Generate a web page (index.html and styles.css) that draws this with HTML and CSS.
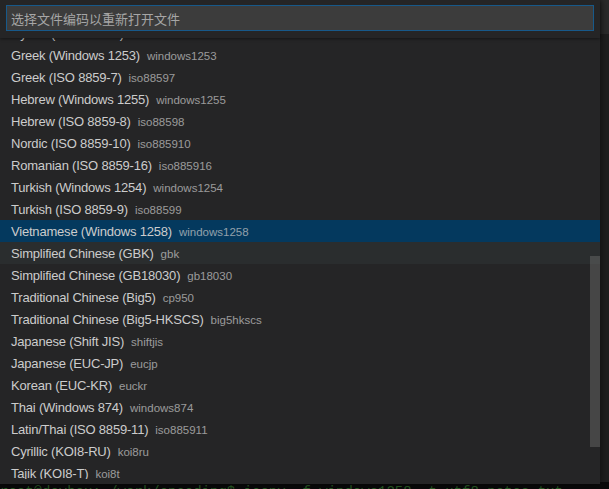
FILE: index.html
```html
<html>
	<head>
		<title>Reopen with Encoding</title>
		<meta charset="utf-8">
		<link rel="stylesheet" href="styles.css">
	</head>
	<body>
		<div class="backdrop">
			<div class="topbar"></div>
			<div class="editor"></div>
			<div class="terminal">root@devbox:~/work/encoding$ iconv -f windows1258 -t utf8 notes.txt</div>
		</div>

		<div class="quick-open">
			<div class="header">
				<input class="filter" type="text" placeholder="选择文件编码以重新打开文件">
			</div>
			<div class="list">
				<div class="rows">
					<div class="row"><span class="label">Cyrillic (ISO 8859-5)</span><span class="desc">iso88595</span></div>
					<div class="row"><span class="label">Greek (Windows 1253)</span><span class="desc">windows1253</span></div>
					<div class="row"><span class="label">Greek (ISO 8859-7)</span><span class="desc">iso88597</span></div>
					<div class="row"><span class="label">Hebrew (Windows 1255)</span><span class="desc">windows1255</span></div>
					<div class="row"><span class="label">Hebrew (ISO 8859-8)</span><span class="desc">iso88598</span></div>
					<div class="row"><span class="label">Nordic (ISO 8859-10)</span><span class="desc">iso885910</span></div>
					<div class="row"><span class="label">Romanian (ISO 8859-16)</span><span class="desc">iso885916</span></div>
					<div class="row"><span class="label">Turkish (Windows 1254)</span><span class="desc">windows1254</span></div>
					<div class="row"><span class="label">Turkish (ISO 8859-9)</span><span class="desc">iso88599</span></div>
					<div class="row selected"><span class="label">Vietnamese (Windows 1258)</span><span class="desc">windows1258</span></div>
					<div class="row hover"><span class="label">Simplified Chinese (GBK)</span><span class="desc">gbk</span></div>
					<div class="row"><span class="label">Simplified Chinese (GB18030)</span><span class="desc">gb18030</span></div>
					<div class="row"><span class="label">Traditional Chinese (Big5)</span><span class="desc">cp950</span></div>
					<div class="row"><span class="label">Traditional Chinese (Big5-HKSCS)</span><span class="desc">big5hkscs</span></div>
					<div class="row"><span class="label">Japanese (Shift JIS)</span><span class="desc">shiftjis</span></div>
					<div class="row"><span class="label">Japanese (EUC-JP)</span><span class="desc">eucjp</span></div>
					<div class="row"><span class="label">Korean (EUC-KR)</span><span class="desc">euckr</span></div>
					<div class="row"><span class="label">Thai (Windows 874)</span><span class="desc">windows874</span></div>
					<div class="row"><span class="label">Latin/Thai (ISO 8859-11)</span><span class="desc">iso885911</span></div>
					<div class="row"><span class="label">Cyrillic (KOI8-RU)</span><span class="desc">koi8ru</span></div>
					<div class="row"><span class="label">Tajik (KOI8-T)</span><span class="desc">koi8t</span></div>
				</div>
				<div class="scrollbar"></div>
			</div>
		</div>
	</body>
</html>
```

FILE: styles.css
```css
html, body {
	margin: 0;
	padding: 0;
	height: 100%;
	overflow: hidden;
}

body {
	background: #1e1e1e;
	font-family: "Liberation Sans", "Noto Sans CJK SC", sans-serif;
	color: #cccccc;
}

.backdrop {
	display: flex;
	flex-direction: column;
	height: 100%;
}

.topbar {
	height: 34px;
	background: #2a2a2a;
}

.editor {
	flex: 1;
	background: #1e1e1e;
}

.terminal {
	height: 5px;
	padding-top: 2px;
	overflow: hidden;
	background: #0a0a0a;
	color: #2a5f26;
	font-family: "Liberation Mono", monospace;
	font-size: 14px;
	line-height: 16px;
	white-space: nowrap;
}

/* the quick pick floats over the editor */
.quick-open {
	position: absolute;
	top: 0;
	left: 0;
	width: 600px;
	height: 484px;
	background: #252526;
	box-shadow: 0 0 8px rgba(0, 0, 0, 0.6);
	display: flex;
	flex-direction: column;
}

.header {
	padding: 5px 6px 7px 6px;
	box-shadow: 0 1px 3px rgba(0, 0, 0, 0.45);
	position: relative;
	z-index: 1;
}

.filter {
	display: block;
	width: 100%;
	height: 26px;
	box-sizing: border-box;
	margin: 0;
	padding: 0 4px;
	background: #3c3c3c;
	border: 1px solid #17598a;
	outline: none;
	color: #cccccc;
	font-family: "Noto Sans CJK SC", sans-serif;
	font-size: 13px;
}

.filter::placeholder {
	color: #a6a6a6;
}

.list {
	position: relative;
	height: 441px;
	overflow: hidden;
}

.rows {
	margin-top: -16px;
}

.row {
	height: 22px;
	line-height: 23px;
	padding-left: 11px;
	white-space: nowrap;
	font-size: 13px;
}

.row.selected {
	background: #04395e;
}

.row.hover {
	background: #2a2d2e;
}

.label {
	color: #cccccc;
	letter-spacing: -0.2px;
}

.desc {
	margin-left: 7px;
	font-size: 11.5px;
	color: #cccccc;
	opacity: 0.7;
}

.scrollbar {
	position: absolute;
	right: 0;
	top: 218px;
	width: 10px;
	height: 191px;
	background: rgba(121, 121, 121, 0.4);
}
```
